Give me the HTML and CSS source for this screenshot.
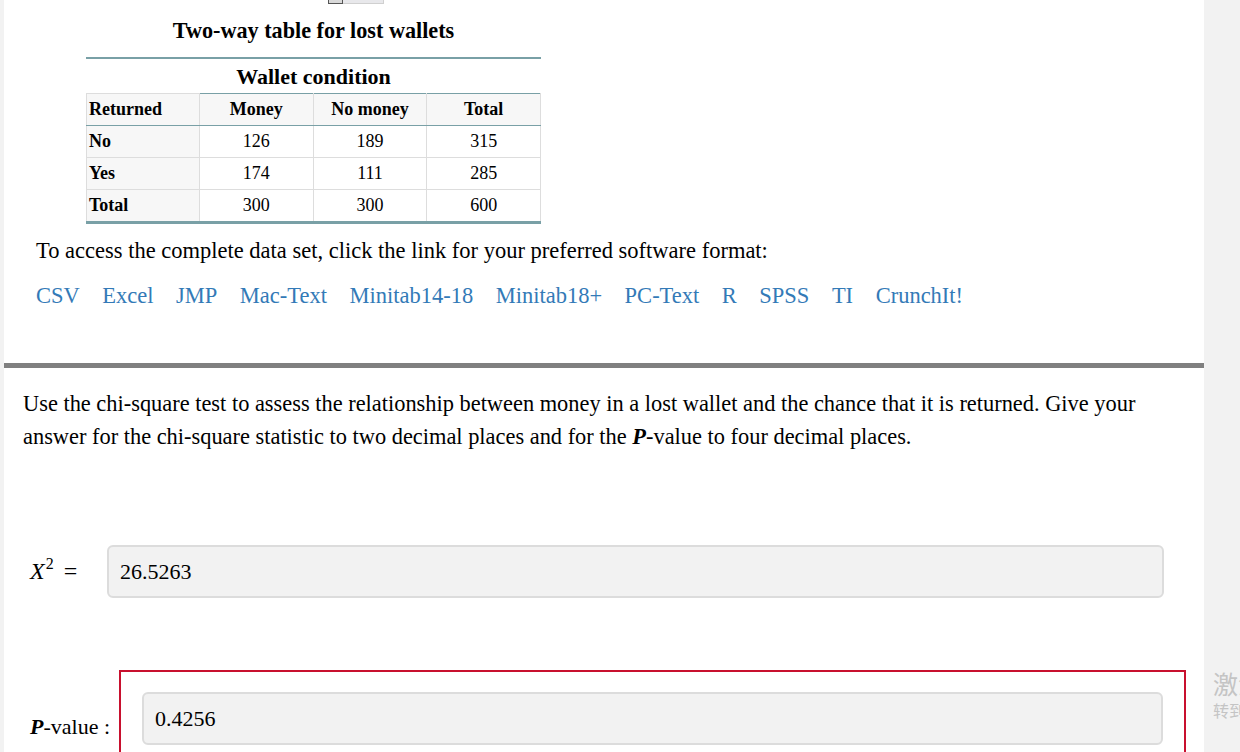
FILE: index.html
```html
<!DOCTYPE html>
<html lang="en">
<head>
<meta charset="utf-8">
<title>Two-way table for lost wallets</title>
<link rel="stylesheet" href="styles.css">
</head>
<body>
<div class="page">
  <div class="gutter"></div>
  <main class="main">
    <section class="data-section">
      <div class="tabs"><span class="tab tab-active"></span><span class="tab tab-idle"></span></div>
      <div class="table-block">
        <h2 class="table-title">Two-way table for lost wallets</h2>
        <div class="table-caption">Wallet condition</div>
        <table class="wallet-table">
          <thead>
            <tr>
              <th class="row-head first">Returned</th>
              <th class="col-head">Money</th>
              <th class="col-head">No money</th>
              <th class="col-head">Total</th>
            </tr>
          </thead>
          <tbody>
            <tr>
              <th class="row-head">No</th>
              <td>126</td><td>189</td><td>315</td>
            </tr>
            <tr>
              <th class="row-head">Yes</th>
              <td>174</td><td>111</td><td>285</td>
            </tr>
            <tr class="total-row">
              <th class="row-head">Total</th>
              <td>300</td><td>300</td><td>600</td>
            </tr>
          </tbody>
        </table>
      </div>
      <p class="access">To access the complete data set, click the link for your preferred software format:</p>
      <nav class="links">
        <a href="#">CSV</a>
        <a href="#">Excel</a>
        <a href="#">JMP</a>
        <a href="#">Mac-Text</a>
        <a href="#">Minitab14-18</a>
        <a href="#">Minitab18+</a>
        <a href="#">PC-Text</a>
        <a href="#">R</a>
        <a href="#">SPSS</a>
        <a href="#">TI</a>
        <a href="#">CrunchIt!</a>
      </nav>
    </section>
    <div class="bar"></div>
    <section class="question-section">
      <p class="question">Use the chi-square test to assess the relationship between money in a lost wallet and the chance that it is returned. Give your answer for the chi-square statistic to two decimal places and for the <b><i>P</i></b>-value to four decimal places.</p>
      <div class="answers">
        <div class="answer-row">
          <label class="label label-x"><i class="math-x">X</i><sup>2</sup><span class="eq">=</span></label>
          <div class="field">26.5263</div>
        </div>
        <div class="answer-row answer-row-p">
          <label class="label label-p"><b><i>P</i></b>-value :</label>
          <div class="flagged">
            <div class="field">0.4256</div>
          </div>
        </div>
      </div>
    </section>
  </main>
  <aside class="side">
    <div class="watermark">
      <div class="wm-big">激活 Windows</div>
      <div class="wm-small">转到“设置”以激活 Windows。</div>
    </div>
  </aside>
</div>
</body>
</html>
```

FILE: styles.css
```css
html, body {
  margin: 0;
  padding: 0;
  background: #f2f2f2;
  overflow: hidden;
}

body {
  font-family: "Liberation Serif", "Times New Roman", serif;
  color: #000;
}

.page {
  display: flex;
  min-height: 900px;
}

.gutter {
  width: 4px;
  flex: none;
  background: #f2f2f2;
}

.main {
  width: 1200px;
  flex: none;
  background: #fff;
}

.side {
  flex: 1;
  position: relative;
  overflow: hidden;
  background: #f2f2f2;
}

.watermark {
  position: absolute;
  top: 666px;
  left: 9px;
  white-space: nowrap;
  color: #c4c4c4;
  font-family: "Noto Sans CJK SC", "Noto Sans", sans-serif;
}

.wm-big {
  font-size: 25px;
  line-height: 34px;
}

.wm-small {
  font-size: 16px;
  line-height: 20px;
}

/* top data section */
.data-section {
  height: 363px;
  box-sizing: border-box;
}

.tabs {
  display: flex;
  height: 4px;
  margin-left: 324px;
}

.tab {
  display: block;
  height: 4px;
  box-sizing: border-box;
}

.tab-active {
  width: 15px;
  background: #d9d9d9;
  border: 1px solid #555;
  border-top: none;
}

.tab-idle {
  width: 41px;
  background: #e8e8eb;
  border: 1px solid #d0d0d0;
  border-top: none;
  border-left: none;
}

.table-block {
  margin-left: 82px;
  width: 455px;
}

.table-title {
  margin: 12px 0 11px;
  font-size: 22.2px;
  line-height: 30px;
  font-weight: 700;
  text-align: center;
}

.table-caption {
  border-top: 2px solid #79a0a6;
  height: 34px;
  line-height: 36px;
  font-size: 22px;
  font-weight: 700;
  text-align: center;
}

.wallet-table {
  width: 455px;
  border-collapse: collapse;
  font-size: 18px;
  table-layout: fixed;
}

.wallet-table th,
.wallet-table td {
  border: 1px solid #dddddd;
  height: 31px;
  padding: 0;
  line-height: 31px;
  text-align: center;
}

.wallet-table th {
  font-weight: 700;
}

.wallet-table .row-head {
  text-align: left;
  padding-left: 2px;
  background: #f7f7f7;
  width: 110px;
}

.wallet-table thead th {
  background: #f7f7f7;
  border-bottom: 1px solid #79a0a6;
}

.wallet-table thead .col-head {
  border-top: 1px solid #79a0a6;
}

.wallet-table .total-row th,
.wallet-table .total-row td {
  border-top: 1px solid #79a0a6;
  border-bottom: 3px solid #79a0a6;
}

.access {
  margin: 12px 0 0 32px;
  font-size: 22.5px;
  line-height: 30px;
}

.links {
  display: flex;
  gap: 22.5px;
  margin: 15px 0 0 32px;
  font-size: 22.5px;
  line-height: 30px;
}

.links a {
  color: #337ab7;
  text-decoration: none;
}

.bar {
  height: 5px;
  background: #808080;
}

/* question section */
.question-section {
  padding: 19px 0 0 19px;
}

.question {
  margin: 0;
  width: 1150px;
  font-size: 22.4px;
  line-height: 33px;
}

.answers {
  margin-top: 92px;
  padding-left: 7px;
}

.answer-row {
  display: flex;
  align-items: center;
}

.answer-row-p {
  align-items: flex-start;
  margin-top: 72px;
}

.label {
  font-size: 22px;
  line-height: 30px;
  flex: none;
}

.math-x {
  font-size: 24px;
  letter-spacing: 1px;
}

.label sup {
  font-size: 16px;
  line-height: 0;
  vertical-align: 10px;
}

.eq {
  margin-left: 10px;
  font-size: 24px;
}

.label-x {
  width: 77px;
}

.label-p {
  width: 89px;
  padding-top: 42px;
}

.field {
  box-sizing: border-box;
  width: 1057px;
  height: 53px;
  border: 2px solid #dcdcdc;
  border-radius: 6px;
  background: #f2f2f2;
  padding-left: 11px;
  font-size: 22px;
  line-height: 49px;
}

.flagged {
  box-sizing: border-box;
  width: 1067px;
  height: 120px;
  border: 2px solid #c8102e;
  padding: 20px 0 0 21px;
}

.flagged .field {
  width: 1021px;
}
```
